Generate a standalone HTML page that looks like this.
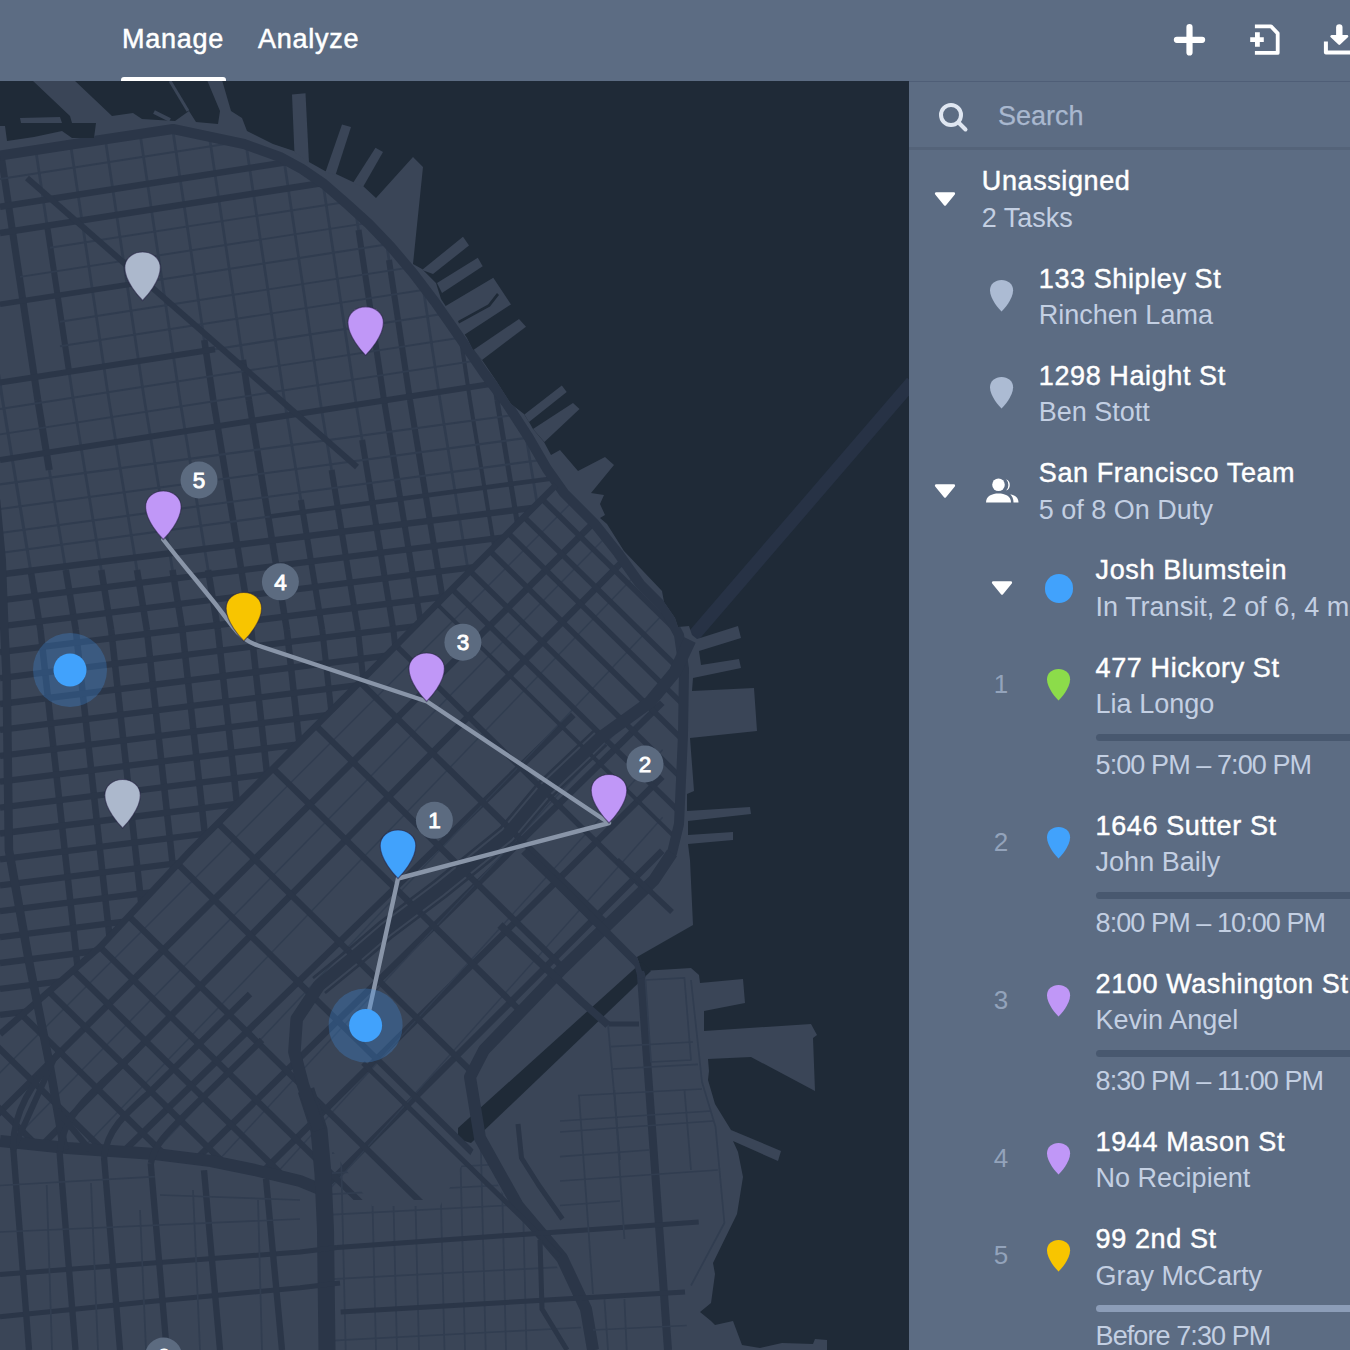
<!DOCTYPE html>
<html><head><meta charset="utf-8"><title>Dispatch</title>
<style>
*{box-sizing:border-box;margin:0;padding:0}
html,body{width:1350px;height:1350px;overflow:hidden;background:#1f2a37;font-family:"Liberation Sans",sans-serif;}
.map{position:absolute;left:0;top:0}
.map text{font-family:"Liberation Sans",sans-serif}
.hdr{position:absolute;left:0;top:0;width:1350px;height:80.5px;background:#5c6c83;z-index:3}
.tab{position:absolute;top:24px;font-size:27px;color:#fff;letter-spacing:.75px;-webkit-text-stroke:.5px #fff;white-space:nowrap}
.ul{position:absolute;left:120.5px;top:76.5px;width:105px;height:4px;background:#fff;border-radius:3px 3px 0 0}
.side{position:absolute;left:909px;top:80.5px;width:441px;height:1270px;background:#5c6c83;z-index:2;overflow:hidden}
.side .topline{position:absolute;left:0;top:0;width:441px;height:1.5px;background:#4f5e77}
.side .sline{position:absolute;left:0;top:66.5px;width:441px;height:2.5px;background:#546379}
.t{position:absolute;white-space:nowrap;font-size:27px;line-height:30px}
.t.h{color:#fff;-webkit-text-stroke:.45px #fff;letter-spacing:.6px}
.t.s{color:#c3cfe2;letter-spacing:0}
.t.tm{letter-spacing:-.92px}
.t.n{color:#93a3bb;font-size:26px}
.bar{position:absolute;left:187px;width:260px;height:7px;border-radius:4px;background:#48586f}
.bar.l{background:#8c9db8}
svg.i{position:absolute;overflow:visible}
</style></head><body>
<svg class="map" width="909" height="1350" viewBox="0 0 909 1350">
<defs><clipPath id="landclip"><polygon points="0.0,126.0 5.0,126.0 7.0,141.0 34.0,137.0 62.0,131.0 72.0,138.0 94.0,138.0 96.0,123.0 72.0,123.0 70.0,116.0 32.0,80.0 74.0,80.0 112.0,116.0 133.0,113.0 142.0,119.0 175.0,121.0 189.0,111.0 196.0,122.0 218.0,124.0 220.0,111.0 207.0,80.0 222.0,80.0 231.0,111.0 242.0,118.0 247.0,131.0 273.0,144.0 294.0,151.0 309.0,162.0 325.0,171.0 336.0,174.0 353.0,182.0 363.0,186.0 376.0,198.0 413.0,157.0 423.0,167.0 413.0,264.0 422.0,269.0 436.0,283.0 441.0,299.0 455.0,320.0 467.0,338.0 473.0,350.0 482.0,360.0 497.0,382.0 511.0,404.0 524.0,414.0 529.0,422.0 533.0,429.0 544.0,442.0 551.0,455.0 560.0,450.0 578.0,471.0 605.0,457.0 614.0,465.0 591.0,493.0 604.0,495.0 600.0,504.0 605.0,515.0 600.0,518.0 607.0,524.0 624.0,551.0 662.0,591.0 664.0,602.0 675.0,618.0 678.0,627.0 689.0,626.0 692.0,635.0 697.0,639.0 738.0,626.0 741.0,638.0 699.0,651.0 701.0,665.0 739.0,659.0 741.0,668.0 693.0,678.0 692.0,691.0 754.0,688.0 757.0,731.0 690.0,738.0 694.0,791.0 687.0,794.0 687.0,811.0 750.0,807.0 751.0,814.0 688.0,821.0 688.0,835.0 733.0,832.0 733.0,840.0 688.0,844.0 690.0,860.0 693.0,925.0 637.0,957.0 642.0,971.0 691.0,968.0 699.0,975.0 700.0,983.0 743.0,979.0 745.0,1003.0 704.0,1011.0 704.0,1031.0 811.0,1024.0 817.0,1035.0 813.0,1038.0 815.0,1091.0 751.0,1057.0 708.0,1059.0 709.0,1071.0 708.0,1080.0 715.0,1104.0 731.0,1130.0 781.0,1151.0 778.0,1161.0 733.0,1141.0 738.0,1152.0 743.0,1177.0 737.0,1214.0 713.0,1263.0 715.0,1274.0 711.0,1303.0 700.0,1312.0 711.0,1321.0 715.0,1325.0 733.0,1321.0 742.0,1345.0 760.0,1348.0 782.0,1343.0 813.0,1344.0 815.0,1339.0 827.0,1340.0 827.0,1350.0 0.0,1350.0"/>
<polygon points="20.0,118.0 60.0,117.0 62.0,123.0 21.0,123.0"/>
<polygon points="294.4,152.0 292.0,94.4 305.5,93.3 309.0,163.0"/>
<polygon points="325.5,172.0 342.0,124.4 351.0,127.0 335.5,175.0"/>
<polygon points="353.0,183.0 375.5,147.8 383.0,152.0 363.0,187.0"/>
<polygon points="422.0,270.0 463.0,236.7 469.0,245.5 433.0,274.0"/>
<polygon points="437.0,283.0 477.8,257.8 482.7,266.2 442.0,293.0"/>
<polygon points="441.0,300.0 444.4,306.7 493.3,277.8 511.0,304.4 463.3,335.5"/>
<polygon points="473.3,350.0 519.0,319.0 526.0,326.7 482.0,360.0"/>
<polygon points="524.4,414.4 561.8,385.5 566.7,392.0 529.0,422.0"/>
<polygon points="533.0,429.0 573.0,403.0 579.5,409.0 544.4,442.0"/>
</clipPath>
<clipPath id="northclip"><polygon points="0.0,155.5 107.0,139.0 173.0,129.0 244.0,144.0 280.0,157.0 302.0,169.0 324.0,184.0 347.0,204.0 369.0,224.0 391.0,247.0 413.0,273.0 435.0,302.0 458.0,335.0 484.0,373.0 507.0,404.0 529.0,438.0 547.0,469.0 556.0,485.0 542.0,499.0 445.0,596.0 362.0,680.0 191.0,850.0 100.0,947.0 0.0,1034.0"/></clipPath>
<clipPath id="somaclip"><polygon points="0.0,1034.0 100.0,947.0 191.0,850.0 362.0,680.0 445.0,596.0 542.0,499.0 564.0,493.0 595.0,524.0 618.0,553.0 640.0,584.0 665.0,609.0 679.0,635.0 684.0,669.0 683.0,735.0 681.0,780.0 679.0,824.0 672.0,853.0 654.0,880.0 560.0,971.0 484.0,1050.0 470.0,1077.0 480.0,1138.0 445.0,1200.0 330.0,1200.0 322.0,1190.0 300.0,1181.0 255.0,1170.0 211.0,1161.0 155.0,1154.0 67.0,1148.0 0.0,1141.0"/></clipPath>
<clipPath id="potclip"><polygon points="332.0,1150.0 372.0,1206.0 440.0,1206.0 470.0,1150.0 485.0,1150.0 500.0,1190.0 545.0,1245.0 575.0,1300.0 586.0,1350.0 332.0,1350.0"/></clipPath>
</defs>
<rect width="909" height="1350" fill="#1f2a37"/>
<line x1="690" y1="640" x2="912" y2="382" stroke="#273245" stroke-width="13"/>
<polygon points="0.0,126.0 5.0,126.0 7.0,141.0 34.0,137.0 62.0,131.0 72.0,138.0 94.0,138.0 96.0,123.0 72.0,123.0 70.0,116.0 32.0,80.0 74.0,80.0 112.0,116.0 133.0,113.0 142.0,119.0 175.0,121.0 189.0,111.0 196.0,122.0 218.0,124.0 220.0,111.0 207.0,80.0 222.0,80.0 231.0,111.0 242.0,118.0 247.0,131.0 273.0,144.0 294.0,151.0 309.0,162.0 325.0,171.0 336.0,174.0 353.0,182.0 363.0,186.0 376.0,198.0 413.0,157.0 423.0,167.0 413.0,264.0 422.0,269.0 436.0,283.0 441.0,299.0 455.0,320.0 467.0,338.0 473.0,350.0 482.0,360.0 497.0,382.0 511.0,404.0 524.0,414.0 529.0,422.0 533.0,429.0 544.0,442.0 551.0,455.0 560.0,450.0 578.0,471.0 605.0,457.0 614.0,465.0 591.0,493.0 604.0,495.0 600.0,504.0 605.0,515.0 600.0,518.0 607.0,524.0 624.0,551.0 662.0,591.0 664.0,602.0 675.0,618.0 678.0,627.0 689.0,626.0 692.0,635.0 697.0,639.0 738.0,626.0 741.0,638.0 699.0,651.0 701.0,665.0 739.0,659.0 741.0,668.0 693.0,678.0 692.0,691.0 754.0,688.0 757.0,731.0 690.0,738.0 694.0,791.0 687.0,794.0 687.0,811.0 750.0,807.0 751.0,814.0 688.0,821.0 688.0,835.0 733.0,832.0 733.0,840.0 688.0,844.0 690.0,860.0 693.0,925.0 637.0,957.0 642.0,971.0 691.0,968.0 699.0,975.0 700.0,983.0 743.0,979.0 745.0,1003.0 704.0,1011.0 704.0,1031.0 811.0,1024.0 817.0,1035.0 813.0,1038.0 815.0,1091.0 751.0,1057.0 708.0,1059.0 709.0,1071.0 708.0,1080.0 715.0,1104.0 731.0,1130.0 781.0,1151.0 778.0,1161.0 733.0,1141.0 738.0,1152.0 743.0,1177.0 737.0,1214.0 713.0,1263.0 715.0,1274.0 711.0,1303.0 700.0,1312.0 711.0,1321.0 715.0,1325.0 733.0,1321.0 742.0,1345.0 760.0,1348.0 782.0,1343.0 813.0,1344.0 815.0,1339.0 827.0,1340.0 827.0,1350.0 0.0,1350.0" fill="#3a4557"/>
<polygon points="20.0,118.0 60.0,117.0 62.0,123.0 21.0,123.0" fill="#3a4557"/>
<polygon points="294.4,152.0 292.0,94.4 305.5,93.3 309.0,163.0" fill="#3a4557"/>
<polygon points="325.5,172.0 342.0,124.4 351.0,127.0 335.5,175.0" fill="#3a4557"/>
<polygon points="353.0,183.0 375.5,147.8 383.0,152.0 363.0,187.0" fill="#3a4557"/>
<polygon points="422.0,270.0 463.0,236.7 469.0,245.5 433.0,274.0" fill="#3a4557"/>
<polygon points="437.0,283.0 477.8,257.8 482.7,266.2 442.0,293.0" fill="#3a4557"/>
<polygon points="441.0,300.0 444.4,306.7 493.3,277.8 511.0,304.4 463.3,335.5" fill="#3a4557"/>
<polygon points="473.3,350.0 519.0,319.0 526.0,326.7 482.0,360.0" fill="#3a4557"/>
<polygon points="524.4,414.4 561.8,385.5 566.7,392.0 529.0,422.0" fill="#3a4557"/>
<polygon points="533.0,429.0 573.0,403.0 579.5,409.0 544.4,442.0" fill="#3a4557"/>
<line x1="170" y1="81" x2="188" y2="111" stroke="#3a4557" stroke-width="3"/>
<line x1="154" y1="112" x2="170" y2="120" stroke="#3a4557" stroke-width="4"/>
<polygon points="458.0,321.0 488.0,304.4 497.0,293.0 499.0,295.0 490.0,306.5 459.0,323.5" fill="#1f2a37"/>
<polygon points="642.0,962.0 651.0,971.0 471.0,1143.0 458.0,1139.0 458.0,1128.0" fill="#1f2a37"/>
<g clip-path="url(#landclip)" fill="none" stroke-linecap="butt" stroke-linejoin="round">
<g clip-path="url(#northclip)">
<line x1="-84.0" y1="60.0" x2="-33.0" y2="400.0" stroke="#303c4f" stroke-width="3"/>
<line x1="-33.0" y1="400.0" x2="-9.9" y2="540.0" stroke="#303c4f" stroke-width="3"/>
<line x1="-48.5" y1="60.0" x2="2.5" y2="400.0" stroke="#303c4f" stroke-width="3"/>
<line x1="2.5" y1="400.0" x2="30.6" y2="570.0" stroke="#303c4f" stroke-width="3"/>
<line x1="30.6" y1="570.0" x2="40.5" y2="630.0" stroke="#2b3648" stroke-width="6.5"/>
<line x1="40.5" y1="630.0" x2="125.2" y2="1400.0" stroke="#2b3648" stroke-width="6.5"/>
<line x1="-13.2" y1="60.0" x2="37.8" y2="400.0" stroke="#2b3648" stroke-width="7"/>
<line x1="37.8" y1="400.0" x2="49.3" y2="470.0" stroke="#2b3648" stroke-width="7"/>
<line x1="49.3" y1="470.0" x2="65.8" y2="570.0" stroke="#303c4f" stroke-width="2.7"/>
<line x1="65.8" y1="570.0" x2="75.8" y2="630.0" stroke="#2b3648" stroke-width="6.5"/>
<line x1="75.8" y1="630.0" x2="160.4" y2="1400.0" stroke="#2b3648" stroke-width="6.5"/>
<line x1="22.3" y1="60.0" x2="47.0" y2="225.0" stroke="#303c4f" stroke-width="2.7"/>
<line x1="47.0" y1="225.0" x2="69.1" y2="372.0" stroke="#2b3648" stroke-width="6"/>
<line x1="69.1" y1="372.0" x2="73.3" y2="400.0" stroke="#303c4f" stroke-width="2.7"/>
<line x1="73.3" y1="400.0" x2="101.3" y2="570.0" stroke="#303c4f" stroke-width="2.7"/>
<line x1="101.3" y1="570.0" x2="111.2" y2="630.0" stroke="#2b3648" stroke-width="6.5"/>
<line x1="111.2" y1="630.0" x2="195.9" y2="1400.0" stroke="#2b3648" stroke-width="6.5"/>
<line x1="57.9" y1="60.0" x2="108.9" y2="400.0" stroke="#303c4f" stroke-width="2.7"/>
<line x1="108.9" y1="400.0" x2="137.0" y2="570.0" stroke="#303c4f" stroke-width="2.7"/>
<line x1="137.0" y1="570.0" x2="146.9" y2="630.0" stroke="#2b3648" stroke-width="6.5"/>
<line x1="146.9" y1="630.0" x2="231.6" y2="1400.0" stroke="#2b3648" stroke-width="6.5"/>
<line x1="93.4" y1="60.0" x2="144.4" y2="400.0" stroke="#303c4f" stroke-width="2.7"/>
<line x1="144.4" y1="400.0" x2="172.5" y2="570.0" stroke="#303c4f" stroke-width="2.7"/>
<line x1="172.5" y1="570.0" x2="182.4" y2="630.0" stroke="#2b3648" stroke-width="6.5"/>
<line x1="182.4" y1="630.0" x2="267.1" y2="1400.0" stroke="#2b3648" stroke-width="6.5"/>
<line x1="129.0" y1="60.0" x2="180.0" y2="400.0" stroke="#303c4f" stroke-width="2.7"/>
<line x1="180.0" y1="400.0" x2="208.1" y2="570.0" stroke="#303c4f" stroke-width="2.7"/>
<line x1="208.1" y1="570.0" x2="217.9" y2="630.0" stroke="#2b3648" stroke-width="6.5"/>
<line x1="217.9" y1="630.0" x2="302.6" y2="1400.0" stroke="#2b3648" stroke-width="6.5"/>
<line x1="162.3" y1="60.0" x2="204.3" y2="340.0" stroke="#303c4f" stroke-width="2.7"/>
<line x1="204.3" y1="340.0" x2="213.3" y2="400.0" stroke="#2b3648" stroke-width="6.5"/>
<line x1="213.3" y1="400.0" x2="251.2" y2="630.0" stroke="#2b3648" stroke-width="6.5"/>
<line x1="251.2" y1="630.0" x2="335.9" y2="1400.0" stroke="#2b3648" stroke-width="6.5"/>
<line x1="197.9" y1="60.0" x2="242.9" y2="360.0" stroke="#303c4f" stroke-width="2.7"/>
<line x1="242.9" y1="360.0" x2="248.9" y2="400.0" stroke="#2b3648" stroke-width="6.5"/>
<line x1="248.9" y1="400.0" x2="286.9" y2="630.0" stroke="#2b3648" stroke-width="6.5"/>
<line x1="286.9" y1="630.0" x2="371.6" y2="1400.0" stroke="#2b3648" stroke-width="6.5"/>
<line x1="233.4" y1="60.0" x2="284.4" y2="400.0" stroke="#303c4f" stroke-width="2.7"/>
<line x1="284.4" y1="400.0" x2="300.9" y2="500.0" stroke="#303c4f" stroke-width="2.7"/>
<line x1="300.9" y1="500.0" x2="322.3" y2="630.0" stroke="#2b3648" stroke-width="6"/>
<line x1="322.3" y1="630.0" x2="407.0" y2="1400.0" stroke="#2b3648" stroke-width="6"/>
<line x1="269.0" y1="60.0" x2="320.0" y2="400.0" stroke="#303c4f" stroke-width="2.7"/>
<line x1="320.0" y1="400.0" x2="331.6" y2="470.0" stroke="#303c4f" stroke-width="2.7"/>
<line x1="331.6" y1="470.0" x2="357.9" y2="630.0" stroke="#2b3648" stroke-width="6"/>
<line x1="357.9" y1="630.0" x2="442.6" y2="1400.0" stroke="#2b3648" stroke-width="6"/>
<line x1="304.5" y1="60.0" x2="355.5" y2="400.0" stroke="#303c4f" stroke-width="2.7"/>
<line x1="355.5" y1="400.0" x2="362.1" y2="440.0" stroke="#303c4f" stroke-width="2.7"/>
<line x1="362.1" y1="440.0" x2="393.4" y2="630.0" stroke="#2b3648" stroke-width="6"/>
<line x1="393.4" y1="630.0" x2="478.1" y2="1400.0" stroke="#2b3648" stroke-width="6"/>
<line x1="333.0" y1="60.0" x2="358.5" y2="230.0" stroke="#303c4f" stroke-width="2.7"/>
<line x1="358.5" y1="230.0" x2="384.0" y2="400.0" stroke="#2b3648" stroke-width="6"/>
<line x1="384.0" y1="400.0" x2="421.9" y2="630.0" stroke="#2b3648" stroke-width="6"/>
<line x1="421.9" y1="630.0" x2="506.6" y2="1400.0" stroke="#2b3648" stroke-width="6"/>
<line x1="359.0" y1="60.0" x2="389.0" y2="260.0" stroke="#303c4f" stroke-width="2.7"/>
<line x1="389.0" y1="260.0" x2="410.0" y2="400.0" stroke="#2b3648" stroke-width="6"/>
<line x1="410.0" y1="400.0" x2="447.9" y2="630.0" stroke="#2b3648" stroke-width="6"/>
<line x1="447.9" y1="630.0" x2="532.6" y2="1400.0" stroke="#2b3648" stroke-width="6"/>
<line x1="389.0" y1="60.0" x2="440.0" y2="400.0" stroke="#303c4f" stroke-width="2.7"/>
<line x1="440.0" y1="400.0" x2="477.9" y2="630.0" stroke="#303c4f" stroke-width="2.7"/>
<line x1="477.9" y1="630.0" x2="562.6" y2="1400.0" stroke="#303c4f" stroke-width="2.7"/>
<line x1="419.0" y1="60.0" x2="470.0" y2="400.0" stroke="#2b3648" stroke-width="4"/>
<line x1="470.0" y1="400.0" x2="507.9" y2="630.0" stroke="#2b3648" stroke-width="4"/>
<line x1="507.9" y1="630.0" x2="592.6" y2="1400.0" stroke="#2b3648" stroke-width="4"/>
<line x1="446.0" y1="60.0" x2="497.0" y2="400.0" stroke="#2b3648" stroke-width="5"/>
<line x1="497.0" y1="400.0" x2="535.0" y2="630.0" stroke="#2b3648" stroke-width="5"/>
<line x1="535.0" y1="630.0" x2="619.7" y2="1400.0" stroke="#2b3648" stroke-width="5"/>
<line x1="469.0" y1="60.0" x2="520.0" y2="400.0" stroke="#303c4f" stroke-width="2.7"/>
<line x1="520.0" y1="400.0" x2="558.0" y2="630.0" stroke="#303c4f" stroke-width="2.7"/>
<line x1="558.0" y1="630.0" x2="642.7" y2="1400.0" stroke="#303c4f" stroke-width="2.7"/>
<line x1="0.0" y1="179.0" x2="909.0" y2="38.1" stroke="#303c4f" stroke-width="1.9"/>
<line x1="0.0" y1="206.7" x2="909.0" y2="65.8" stroke="#2b3648" stroke-width="6.5"/>
<line x1="0.0" y1="233.0" x2="909.0" y2="92.1" stroke="#2b3648" stroke-width="6.5"/>
<line x1="50.0" y1="247.8" x2="909.0" y2="114.6" stroke="#303c4f" stroke-width="1.9"/>
<line x1="20.0" y1="276.9" x2="909.0" y2="139.1" stroke="#303c4f" stroke-width="1.9"/>
<line x1="0.0" y1="304.4" x2="140.0" y2="282.7" stroke="#2b3648" stroke-width="5.5"/>
<line x1="140.0" y1="282.7" x2="909.0" y2="163.5" stroke="#303c4f" stroke-width="2.1"/>
<line x1="60.0" y1="321.7" x2="909.0" y2="190.1" stroke="#303c4f" stroke-width="1.9"/>
<line x1="60.0" y1="346.2" x2="909.0" y2="214.6" stroke="#303c4f" stroke-width="1.9"/>
<line x1="0.0" y1="382.5" x2="215.0" y2="349.2" stroke="#2b3648" stroke-width="6"/>
<line x1="215.0" y1="349.2" x2="909.0" y2="241.6" stroke="#303c4f" stroke-width="2.1"/>
<line x1="0.0" y1="409.0" x2="909.0" y2="268.1" stroke="#303c4f" stroke-width="1.9"/>
<line x1="0.0" y1="434.4" x2="909.0" y2="293.5" stroke="#303c4f" stroke-width="1.9"/>
<line x1="0.0" y1="460.0" x2="909.0" y2="319.1" stroke="#2b3648" stroke-width="6"/>
<line x1="0.0" y1="484.4" x2="909.0" y2="361.7" stroke="#303c4f" stroke-width="2.1"/>
<line x1="0.0" y1="509.0" x2="909.0" y2="386.3" stroke="#303c4f" stroke-width="2.1"/>
<line x1="0.0" y1="533.0" x2="909.0" y2="410.3" stroke="#303c4f" stroke-width="2.1"/>
<line x1="0.0" y1="553.0" x2="270.0" y2="516.5" stroke="#303c4f" stroke-width="2.1"/>
<line x1="270.0" y1="516.5" x2="909.0" y2="430.3" stroke="#2b3648" stroke-width="4.5"/>
<line x1="0.0" y1="574.5" x2="909.0" y2="460.9" stroke="#2b3648" stroke-width="6.3"/>
<line x1="0.0" y1="600.4" x2="909.0" y2="486.8" stroke="#2b3648" stroke-width="6.3"/>
<line x1="0.0" y1="626.3" x2="909.0" y2="512.7" stroke="#2b3648" stroke-width="6.3"/>
<line x1="0.0" y1="652.2" x2="909.0" y2="538.6" stroke="#2b3648" stroke-width="6.3"/>
<line x1="0.0" y1="678.1" x2="909.0" y2="564.5" stroke="#2b3648" stroke-width="6.3"/>
<line x1="0.0" y1="704.0" x2="909.0" y2="590.4" stroke="#2b3648" stroke-width="6.3"/>
<line x1="0.0" y1="729.9" x2="909.0" y2="616.3" stroke="#2b3648" stroke-width="6.3"/>
<line x1="0.0" y1="755.8" x2="909.0" y2="642.2" stroke="#2b3648" stroke-width="6.3"/>
<line x1="0.0" y1="781.7" x2="909.0" y2="668.1" stroke="#2b3648" stroke-width="6.3"/>
<line x1="0.0" y1="807.6" x2="909.0" y2="694.0" stroke="#2b3648" stroke-width="6.3"/>
<line x1="0.0" y1="833.5" x2="909.0" y2="719.9" stroke="#2b3648" stroke-width="6.3"/>
<line x1="0.0" y1="859.4" x2="909.0" y2="745.8" stroke="#2b3648" stroke-width="6.3"/>
<line x1="0.0" y1="885.3" x2="909.0" y2="771.7" stroke="#2b3648" stroke-width="6.3"/>
<line x1="0.0" y1="911.2" x2="909.0" y2="797.6" stroke="#2b3648" stroke-width="6.3"/>
<line x1="0.0" y1="937.1" x2="909.0" y2="823.5" stroke="#2b3648" stroke-width="6.3"/>
<line x1="0.0" y1="963.0" x2="909.0" y2="849.4" stroke="#2b3648" stroke-width="6.3"/>
<line x1="0.0" y1="988.9" x2="909.0" y2="875.3" stroke="#2b3648" stroke-width="6.3"/>
<line x1="0.0" y1="1014.8" x2="909.0" y2="901.2" stroke="#2b3648" stroke-width="6.3"/>
<line x1="0.0" y1="1040.7" x2="909.0" y2="927.1" stroke="#2b3648" stroke-width="6.3"/>
<line x1="0.0" y1="1066.6" x2="909.0" y2="953.0" stroke="#2b3648" stroke-width="6.3"/>
<line x1="0.0" y1="1092.5" x2="909.0" y2="978.9" stroke="#2b3648" stroke-width="6.3"/>
</g>
<g clip-path="url(#somaclip)">
<line x1="-187.2" y1="1297.8" x2="794.4" y2="323.4" stroke="#2b3648" stroke-width="6.5"/>
<line x1="-236.8" y1="1425.7" x2="893.6" y2="288.8" stroke="#2b3648" stroke-width="6.5"/>
<line x1="40.0" y1="1232.5" x2="573.3" y2="715.0" stroke="#2b3648" stroke-width="6.5"/>
<line x1="-48.8" y1="1399.1" x2="662.2" y2="702.8" stroke="#2b3648" stroke-width="6.5"/>
<line x1="-48.8" y1="1479.5" x2="662.2" y2="776.8" stroke="#2b3648" stroke-width="6.5"/>
<line x1="-48.8" y1="1559.9" x2="662.2" y2="850.8" stroke="#2b3648" stroke-width="6.5"/>
<line x1="-61.0" y1="1133.5" x2="662.6" y2="411.7" stroke="#313d50" stroke-width="1.4"/>
<line x1="-61.0" y1="1215.5" x2="662.6" y2="479.3" stroke="#313d50" stroke-width="1.4"/>
<line x1="-61.0" y1="1297.5" x2="662.6" y2="546.9" stroke="#313d50" stroke-width="1.4"/>
<line x1="-61.0" y1="1379.5" x2="662.6" y2="614.5" stroke="#313d50" stroke-width="1.4"/>
<line x1="-61.0" y1="1461.5" x2="662.6" y2="682.1" stroke="#313d50" stroke-width="1.4"/>
<line x1="-61.0" y1="1543.5" x2="662.6" y2="749.7" stroke="#313d50" stroke-width="1.4"/>
<line x1="-61.0" y1="1625.5" x2="662.6" y2="817.3" stroke="#313d50" stroke-width="1.4"/>
<line x1="-360.0" y1="1358.0" x2="140.0" y2="1848.0" stroke="#2b3648" stroke-width="6.3"/>
<line x1="-320.0" y1="1322.0" x2="180.0" y2="1812.0" stroke="#2b3648" stroke-width="6.3"/>
<line x1="-280.0" y1="1286.0" x2="220.0" y2="1776.0" stroke="#2b3648" stroke-width="6.3"/>
<line x1="-240.0" y1="1250.0" x2="260.0" y2="1740.0" stroke="#2b3648" stroke-width="6.3"/>
<line x1="-200.0" y1="1214.0" x2="300.0" y2="1704.0" stroke="#2b3648" stroke-width="6.3"/>
<line x1="-160.0" y1="1178.0" x2="340.0" y2="1668.0" stroke="#2b3648" stroke-width="6.3"/>
<line x1="-120.0" y1="1142.0" x2="380.0" y2="1632.0" stroke="#2b3648" stroke-width="6.3"/>
<line x1="-80.0" y1="1106.0" x2="420.0" y2="1596.0" stroke="#2b3648" stroke-width="6.3"/>
<line x1="-40.0" y1="1070.0" x2="460.0" y2="1560.0" stroke="#2b3648" stroke-width="6.3"/>
<line x1="-8.0" y1="1041.2" x2="492.0" y2="1531.2" stroke="#2b3648" stroke-width="6.3"/>
<line x1="22.0" y1="1014.9" x2="522.0" y2="1504.9" stroke="#2b3648" stroke-width="6.3"/>
<line x1="48.9" y1="991.5" x2="548.9" y2="1481.5" stroke="#2b3648" stroke-width="6.3"/>
<line x1="73.3" y1="970.2" x2="573.3" y2="1460.2" stroke="#2b3648" stroke-width="6.3"/>
<line x1="100.0" y1="947.0" x2="600.0" y2="1437.0" stroke="#2b3648" stroke-width="6.3"/>
<line x1="128.9" y1="916.2" x2="628.9" y2="1406.2" stroke="#2b3648" stroke-width="6.3"/>
<line x1="177.8" y1="864.1" x2="677.8" y2="1354.1" stroke="#2b3648" stroke-width="6.3"/>
<line x1="218.0" y1="823.2" x2="718.0" y2="1313.2" stroke="#2b3648" stroke-width="6.3"/>
<line x1="273.0" y1="768.5" x2="773.0" y2="1258.5" stroke="#2b3648" stroke-width="6.3"/>
<line x1="316.0" y1="725.7" x2="816.0" y2="1215.7" stroke="#2b3648" stroke-width="6.3"/>
<line x1="360.0" y1="682.0" x2="860.0" y2="1172.0" stroke="#2b3648" stroke-width="6.3"/>
<line x1="396.0" y1="645.6" x2="896.0" y2="1135.6" stroke="#2b3648" stroke-width="5.5"/>
<line x1="437.0" y1="604.1" x2="937.0" y2="1094.1" stroke="#2b3648" stroke-width="4"/>
<line x1="452.0" y1="589.0" x2="952.0" y2="1079.0" stroke="#2b3648" stroke-width="5.5"/>
<line x1="470.0" y1="571.0" x2="970.0" y2="1061.0" stroke="#2b3648" stroke-width="5.5"/>
<line x1="490.0" y1="551.0" x2="990.0" y2="1041.0" stroke="#2b3648" stroke-width="5.5"/>
<line x1="508.0" y1="533.0" x2="1008.0" y2="1023.0" stroke="#2b3648" stroke-width="5.5"/>
<line x1="524.0" y1="517.0" x2="1024.0" y2="1007.0" stroke="#2b3648" stroke-width="5.5"/>
<line x1="542.0" y1="499.0" x2="1042.0" y2="989.0" stroke="#2b3648" stroke-width="5.5"/>
</g>
<g clip-path="url(#potclip)">
<line x1="340.7" y1="1140.0" x2="345.7" y2="1350.0" stroke="#313d50" stroke-width="1.7"/>
<line x1="371.0" y1="1140.0" x2="376.0" y2="1350.0" stroke="#313d50" stroke-width="1.7"/>
<line x1="392.0" y1="1140.0" x2="397.0" y2="1350.0" stroke="#313d50" stroke-width="1.7"/>
<line x1="414.0" y1="1140.0" x2="419.0" y2="1350.0" stroke="#313d50" stroke-width="1.7"/>
<line x1="439.5" y1="1140.0" x2="444.5" y2="1350.0" stroke="#313d50" stroke-width="1.7"/>
<line x1="460.0" y1="1140.0" x2="465.0" y2="1350.0" stroke="#313d50" stroke-width="1.7"/>
<line x1="480.7" y1="1140.0" x2="485.7" y2="1350.0" stroke="#313d50" stroke-width="1.7"/>
<line x1="501.0" y1="1140.0" x2="506.0" y2="1350.0" stroke="#313d50" stroke-width="1.7"/>
<line x1="521.5" y1="1140.0" x2="526.5" y2="1350.0" stroke="#313d50" stroke-width="1.7"/>
<line x1="325.0" y1="1153.5" x2="600.0" y2="1139.0" stroke="#313d50" stroke-width="1.7"/>
<line x1="325.0" y1="1173.5" x2="600.0" y2="1159.0" stroke="#313d50" stroke-width="1.7"/>
<line x1="325.0" y1="1194.5" x2="600.0" y2="1180.0" stroke="#313d50" stroke-width="1.7"/>
<line x1="325.0" y1="1215.0" x2="600.0" y2="1200.5" stroke="#313d50" stroke-width="1.7"/>
<line x1="325.0" y1="1279.5" x2="600.0" y2="1265.0" stroke="#313d50" stroke-width="1.7"/>
<line x1="325.0" y1="1341.0" x2="600.0" y2="1326.5" stroke="#313d50" stroke-width="1.7"/>
</g>
<polyline points="0.0,155.5 107.0,139.0 173.0,129.0 244.0,144.0 280.0,157.0 302.0,169.0 324.0,184.0 347.0,204.0 369.0,224.0 391.0,247.0 413.0,273.0 435.0,302.0 458.0,335.0 484.0,373.0 507.0,404.0 529.0,438.0 547.0,469.0 564.0,493.0 595.0,524.0 618.0,553.0 640.0,584.0 665.0,609.0 679.0,635.0 684.0,669.0 683.0,735.0 681.0,780.0 679.0,824.0 672.0,853.0 654.0,880.0 560.0,971.0 484.0,1050.0 470.0,1077.0 480.0,1138.0 518.0,1206.0 562.0,1258.0 586.0,1309.0 593.0,1350.0" stroke="#2b3648" stroke-width="10"/>
<polyline points="672.0,853.0 654.0,880.0 560.0,971.0 484.0,1050.0 470.0,1077.0 480.0,1138.0 518.0,1206.0 562.0,1258.0 586.0,1309.0 593.0,1350.0" stroke="#2b3648" stroke-width="12"/>
<polyline points="0.0,1034.0 100.0,947.0 191.0,850.0 362.0,680.0 445.0,596.0 542.0,499.0 556.0,485.0" stroke="#2b3648" stroke-width="6.5"/>
<polyline points="27.0,178.0 357.0,467.0" stroke="#2b3648" stroke-width="6"/>
<polyline points="0.0,1141.0 67.0,1148.0 155.0,1154.0 211.0,1161.0 255.0,1170.0 300.0,1181.0 322.0,1190.0" stroke="#2b3648" stroke-width="12"/>
<polyline points="327.0,1350.0 325.5,1230.0 323.0,1174.0 319.0,1130.0 306.0,1090.0" stroke="#2b3648" stroke-width="17"/>
<polyline points="319.0,1130.0 303.0,1085.0 294.4,1052.0 296.7,1019.0 319.0,985.5 354.4,956.7 385.5,930.0 440.0,889.0 507.0,835.0 545.0,790.0 600.0,738.0 650.0,702.0 675.0,672.0 690.0,640.0" stroke="#2b3648" stroke-width="12.5"/>
<polyline points="363.0,1063.0 530.0,1225.5 560.0,1256.0" stroke="#2b3648" stroke-width="5"/>
<polyline points="640.8,973.0 668.0,1350.0" stroke="#2b3648" stroke-width="8"/>
<polyline points="337.0,1247.5 698.7,1222.0" stroke="#2b3648" stroke-width="5"/>
<polyline points="340.7,1312.0 685.0,1292.0" stroke="#2b3648" stroke-width="5"/>
<polyline points="540.0,1240.0 542.0,1309.0 567.0,1350.0" stroke="#2b3648" stroke-width="5"/>
<polyline points="0.0,1274.4 300.0,1252.0 337.0,1247.5" stroke="#2b3648" stroke-width="5"/>
<polyline points="0.0,1316.7 155.5,1301.0 300.0,1287.8 340.0,1283.0" stroke="#2b3648" stroke-width="5"/>
<polyline points="13.0,1144.9 29.0,1350.0" stroke="#2b3648" stroke-width="6.3"/>
<polyline points="59.5,1151.1 75.5,1350.0" stroke="#2b3648" stroke-width="6.3"/>
<polyline points="104.0,1157.0 120.0,1350.0" stroke="#2b3648" stroke-width="6.3"/>
<polyline points="150.7,1163.2 166.7,1350.0" stroke="#2b3648" stroke-width="6.3"/>
<polyline points="204.0,1170.3 220.0,1350.0" stroke="#2b3648" stroke-width="6.3"/>
<polyline points="266.0,1178.6 282.0,1350.0" stroke="#2b3648" stroke-width="6.3"/>
<polyline points="608.0,1024.0 639.0,1024.0" stroke="#2b3648" stroke-width="5"/>
<polyline points="611.0,1046.7 693.0,1042.0" stroke="#313d50" stroke-width="1.7"/>
<polyline points="613.0,1069.0 698.0,1064.4" stroke="#313d50" stroke-width="1.7"/>
<polyline points="578.0,1095.5 702.0,1089.0" stroke="#313d50" stroke-width="1.7"/>
<polyline points="560.0,1121.0 711.0,1111.0" stroke="#313d50" stroke-width="1.7"/>
<polyline points="560.0,1132.0 713.0,1121.0" stroke="#313d50" stroke-width="1.7"/>
<polyline points="608.0,1024.4 620.0,1160.0" stroke="#313d50" stroke-width="1.7"/>
<polyline points="579.0,1095.5 593.0,1294.0" stroke="#313d50" stroke-width="1.7"/>
<polyline points="684.4,1089.0 691.0,1170.0" stroke="#313d50" stroke-width="1.7"/>
<polyline points="691.0,980.0 702.0,1082.0 715.5,1126.7 724.4,1223.0 691.0,1285.5" stroke="#313d50" stroke-width="1.7"/>
<polyline points="645.5,980.0 684.4,977.8 691.0,1060.0 651.0,1062.0 645.5,980.0" stroke="#313d50" stroke-width="1.7"/>
<polyline points="560.0,1156.7 649.0,1150.0" stroke="#313d50" stroke-width="1.7"/>
<polyline points="560.0,1181.0 717.8,1170.0" stroke="#313d50" stroke-width="1.7"/>
<polyline points="560.0,1205.5 620.0,1201.0" stroke="#313d50" stroke-width="1.7"/>
<polyline points="614.4,1090.0 624.4,1239.0" stroke="#313d50" stroke-width="1.7"/>
<polyline points="604.4,1299.0 608.0,1350.0" stroke="#313d50" stroke-width="1.7"/>
<polyline points="624.4,1299.0 626.7,1350.0" stroke="#313d50" stroke-width="1.7"/>
<polyline points="593.0,1330.0 686.7,1325.5" stroke="#313d50" stroke-width="1.7"/>
<polyline points="-4.0,500.0 1.7,560.0 4.4,630.0 6.7,680.0 8.9,850.0 28.9,961.0 48.9,1061.0 64.4,1150.0" stroke="#2b3648" stroke-width="8.5"/>
<polyline points="53.0,1061.0 13.0,1150.0" stroke="#2b3648" stroke-width="6"/>
<polyline points="0.0,1232.0 300.0,1219.0" stroke="#313d50" stroke-width="1.7"/>
<polyline points="0.0,1185.5 155.0,1176.7" stroke="#313d50" stroke-width="1.7"/>
<polyline points="160.0,1195.0 300.0,1200.0" stroke="#313d50" stroke-width="1.7"/>
<polyline points="46.7,1185.0 52.0,1350.0" stroke="#313d50" stroke-width="1.7"/>
<polyline points="91.0,1183.0 98.0,1350.0" stroke="#313d50" stroke-width="1.7"/>
<polyline points="193.0,1190.0 200.0,1350.0" stroke="#313d50" stroke-width="1.7"/>
<polyline points="258.0,1200.0 262.0,1350.0" stroke="#313d50" stroke-width="1.7"/>
<polyline points="140.0,1210.0 146.0,1350.0" stroke="#313d50" stroke-width="1.7"/>
<polyline points="524.0,851.0 560.0,886.0 638.0,964.0 642.0,978.0" stroke="#2b3648" stroke-width="8"/>
<polyline points="500.0,925.0 582.0,1002.0 608.0,1025.0" stroke="#2b3648" stroke-width="7.5"/>
<polyline points="617.0,860.0 672.0,912.0" stroke="#2b3648" stroke-width="5.5"/>
<polyline points="518.0,1124.0 521.5,1158.0 538.6,1185.0 562.4,1219.0" stroke="#2b3648" stroke-width="5"/>
<polyline points="325.0,992.9 360.5,964.0 391.4,937.5 445.9,896.5 513.5,841.9 551.9,796.6 606.5,744.9" stroke="#2b3648" stroke-width="2.6"/>
<polyline points="313.0,978.1 348.3,949.4 379.6,922.5 434.1,881.5 500.5,828.1 538.1,783.4 593.5,731.1" stroke="#2b3648" stroke-width="2.6"/>
<path d="M13,1146 C14,1112 30,1084 62,1050" stroke="#2b3648" stroke-width="6.3"/>
<path d="M60,1151 C62,1117 92,1092 120,1066 L137,1050" stroke="#2b3648" stroke-width="6.3"/>
<path d="M104,1157 C107,1128 130,1110 150,1092 L250,994" stroke="#2b3648" stroke-width="6.3"/>
<path d="M151,1163 C154,1144 170,1130 190,1110 L262,1040" stroke="#2b3648" stroke-width="6.3"/>
<path d="M57,1110 L90,1150" stroke="#2b3648" stroke-width="6.3"/>
</g>
<path d="M163.3,539.5 Q176,556 196,580 T233,627 Q243,640.5 258,645.5 L427,701.5 L609,823 L398,878.5 L366,1025" fill="none" stroke="#8995a8" stroke-width="4.4" stroke-linejoin="round" stroke-linecap="round"/>
<circle cx="70" cy="670" r="37" fill="#3f9dfb" fill-opacity="0.25"/><circle cx="70" cy="670" r="16.5" fill="#41a2fc"/>
<circle cx="365.6" cy="1025.4" r="37" fill="#3f9dfb" fill-opacity="0.25"/><circle cx="365.6" cy="1025.4" r="16.5" fill="#41a2fc"/>
<path d="M142.6,300.5 C139.1,297.0 124.8,281.5 124.8,267.8 C124.8,258.5 132.8,252.0 142.6,252.0 C152.4,252.0 160.3,258.5 160.3,267.8 C160.3,281.5 146.1,297.0 142.6,300.5Z" fill="#acb8cc" stroke="#221d3f" stroke-opacity=".55" stroke-width="1.2" stroke-linejoin="round"/>
<path d="M365.6,355.3 C362.1,351.8 347.9,336.3 347.9,322.6 C347.9,313.3 355.8,306.8 365.6,306.8 C375.4,306.8 383.4,313.3 383.4,322.6 C383.4,336.3 369.1,351.8 365.6,355.3Z" fill="#c097f7" stroke="#221d3f" stroke-opacity=".55" stroke-width="1.2" stroke-linejoin="round"/>
<path d="M163.3,539.5 C159.8,536.0 145.6,520.5 145.6,506.8 C145.6,497.5 153.5,491.0 163.3,491.0 C173.1,491.0 181.1,497.5 181.1,506.8 C181.1,520.5 166.8,536.0 163.3,539.5Z" fill="#c097f7" stroke="#221d3f" stroke-opacity=".55" stroke-width="1.2" stroke-linejoin="round"/>
<path d="M243.8,641.0 C240.3,637.5 226.1,622.0 226.1,608.3 C226.1,599.0 234.0,592.5 243.8,592.5 C253.6,592.5 261.6,599.0 261.6,608.3 C261.6,622.0 247.3,637.5 243.8,641.0Z" fill="#f8c500" stroke="#221d3f" stroke-opacity=".55" stroke-width="1.2" stroke-linejoin="round"/>
<path d="M122.6,828.0 C119.1,824.5 104.8,809.0 104.8,795.3 C104.8,786.0 112.8,779.5 122.6,779.5 C132.4,779.5 140.3,786.0 140.3,795.3 C140.3,809.0 126.1,824.5 122.6,828.0Z" fill="#acb8cc" stroke="#221d3f" stroke-opacity=".55" stroke-width="1.2" stroke-linejoin="round"/>
<path d="M426.6,701.5 C423.1,698.0 408.9,682.5 408.9,668.8 C408.9,659.5 416.8,653.0 426.6,653.0 C436.4,653.0 444.4,659.5 444.4,668.8 C444.4,682.5 430.1,698.0 426.6,701.5Z" fill="#c097f7" stroke="#221d3f" stroke-opacity=".55" stroke-width="1.2" stroke-linejoin="round"/>
<path d="M609.0,823.0 C605.5,819.5 591.2,804.0 591.2,790.3 C591.2,781.0 599.2,774.5 609.0,774.5 C618.8,774.5 626.8,781.0 626.8,790.3 C626.8,804.0 612.5,819.5 609.0,823.0Z" fill="#c097f7" stroke="#221d3f" stroke-opacity=".55" stroke-width="1.2" stroke-linejoin="round"/>
<path d="M398.0,878.5 C394.5,875.0 380.2,859.5 380.2,845.8 C380.2,836.5 388.2,830.0 398.0,830.0 C407.8,830.0 415.8,836.5 415.8,845.8 C415.8,859.5 401.5,875.0 398.0,878.5Z" fill="#41a2fc" stroke="#221d3f" stroke-opacity=".55" stroke-width="1.2" stroke-linejoin="round"/>
<circle cx="199" cy="480" r="18.5" fill="#5c6b80"/><text x="199" y="488" text-anchor="middle" font-size="22.5" font-weight="400" fill="#fff" stroke="#fff" stroke-width=".9">5</text>
<circle cx="280.4" cy="581.8" r="18.5" fill="#5c6b80"/><text x="280.4" y="589.8" text-anchor="middle" font-size="22.5" font-weight="400" fill="#fff" stroke="#fff" stroke-width=".9">4</text>
<circle cx="462.9" cy="642.2" r="18.5" fill="#5c6b80"/><text x="462.9" y="650.2" text-anchor="middle" font-size="22.5" font-weight="400" fill="#fff" stroke="#fff" stroke-width=".9">3</text>
<circle cx="645" cy="764" r="18.5" fill="#5c6b80"/><text x="645" y="772" text-anchor="middle" font-size="22.5" font-weight="400" fill="#fff" stroke="#fff" stroke-width=".9">2</text>
<circle cx="434.4" cy="820.3" r="18.5" fill="#5c6b80"/><text x="434.4" y="828.3" text-anchor="middle" font-size="22.5" font-weight="400" fill="#fff" stroke="#fff" stroke-width=".9">1</text>
<circle cx="163.5" cy="1356" r="18.5" fill="#5c6b80"/><text x="163.5" y="1364" text-anchor="middle" font-size="22.5" font-weight="400" fill="#fff" stroke="#fff" stroke-width=".9">6</text>
</svg>
<div class="hdr">
  <div class="tab" style="left:122px">Manage</div>
  <div class="tab" style="left:258px">Analyze</div>
  <div class="ul"></div>
  <svg class="i" style="left:0;top:0" width="1350" height="80" viewBox="0 0 1350 80">
    <path d="M1189.5 27.2v25.2M1176.9 39.8h25.2" stroke="#fff" stroke-width="6.2" stroke-linecap="round" fill="none"/>
    <path d="M1254.9 26.3H1271L1277.7 33.4V52.9H1254.9" stroke="#fff" stroke-width="3.8" fill="none" stroke-linejoin="round"/>
    <path d="M1250.2 39.6h13.6M1257.4 32.2v14.6" stroke="#fff" stroke-width="4.8" fill="none"/>
    <path d="M1325.9 41.5V52.6H1352" stroke="#fff" stroke-width="4" fill="none" stroke-linejoin="round"/>
    <path d="M1339.3 27.4V37" stroke="#fff" stroke-width="6.4" fill="none" stroke-linecap="round"/>
    <path d="M1331.6 36.4H1347L1339.3 43.6Z" stroke="#fff" stroke-width="2.6" fill="#fff" stroke-linejoin="round"/>
  </svg>
</div>
<div class="side">
  <div class="topline"></div><div class="sline"></div>
  <svg class="i" style="left:29px;top:21px" width="32" height="32" viewBox="0 0 32 32"><circle cx="13" cy="13" r="10" stroke="#dfe6f1" stroke-width="4" fill="none"/><path d="M20.5 20.5l7 7" stroke="#dfe6f1" stroke-width="4" stroke-linecap="round"/></svg>
  <div class="t s" style="left:89px;top:20px;color:#a9b8cf;-webkit-text-stroke:.25px #a9b8cf">Search</div>
  <svg class="i" style="left:25.4px;top:111.7px" width="22" height="14" viewBox="0 0 22 14"><path d="M2.2 1.6h17.6L11 12.4z" fill="#fff" stroke="#fff" stroke-width="2.6" stroke-linejoin="round"/></svg>
<div class="t h" style="left:72.8px;top:85.5px">Unassigned</div>
<div class="t s" style="left:72.8px;top:122.0px">2 Tasks</div>
<svg class="i" style="left:81.4px;top:199.4px" width="23.1" height="31.6" viewBox="0 0 23.13 31.6"><path d="M11.56,31.60 C9.28,29.32 0.00,19.22 0.00,10.29 C0.00,4.24 5.18,0.00 11.56,0.00 C17.95,0.00 23.13,4.24 23.13,10.29 C23.13,19.22 13.85,29.32 11.56,31.60Z" fill="#acbbd3"/></svg>
<div class="t h" style="left:129.8px;top:183.0px">133 Shipley St</div>
<div class="t s" style="left:129.8px;top:219.5px">Rinchen Lama</div>
<svg class="i" style="left:81.4px;top:296.7px" width="23.1" height="31.6" viewBox="0 0 23.13 31.6"><path d="M11.56,31.60 C9.28,29.32 0.00,19.22 0.00,10.29 C0.00,4.24 5.18,0.00 11.56,0.00 C17.95,0.00 23.13,4.24 23.13,10.29 C23.13,19.22 13.85,29.32 11.56,31.60Z" fill="#acbbd3"/></svg>
<div class="t h" style="left:129.8px;top:280.3px">1298 Haight St</div>
<div class="t s" style="left:129.8px;top:316.8px">Ben Stott</div>
<svg class="i" style="left:25.4px;top:403.1px" width="22" height="14" viewBox="0 0 22 14"><path d="M2.2 1.6h17.6L11 12.4z" fill="#fff" stroke="#fff" stroke-width="2.6" stroke-linejoin="round"/></svg>
<svg class="i" style="left:76.5px;top:397.8px" width="33" height="25" viewBox="0 0 33 25"><circle cx="12.5" cy="6.8" r="6.3" fill="#fff"/><path d="M0 24.5c0-6.5 6-9 12.5-9s12.5 2.5 12.5 9z" fill="#fff"/><path d="M20.2 1.2a6.3 6.3 0 0 1 0 11.4a8.6 8.6 0 0 0 0-11.4z" fill="#fff"/><path d="M24.3 16.2c4.6.9 8.2 3.3 8.2 8.3h-5c0-3.6-1.2-6.3-3.2-8.3z" fill="#fff"/></svg>
<div class="t h" style="left:129.8px;top:377.5px">San Francisco Team</div>
<div class="t s" style="left:129.8px;top:414.0px">5 of 8 On Duty</div>
<svg class="i" style="left:82.3px;top:500.8px" width="22" height="14" viewBox="0 0 22 14"><path d="M2.2 1.6h17.6L11 12.4z" fill="#fff" stroke="#fff" stroke-width="2.6" stroke-linejoin="round"/></svg>
<div style="position:absolute;left:135.5px;top:493.5px;width:28.6px;height:28.6px;border-radius:50%;background:#41a2fc"></div>
<div class="t h" style="left:186.6px;top:474.8px">Josh Blumstein</div>
<div class="t s" style="left:186.6px;top:511.3px">In Transit, 2 of 6, 4 mi</div>
<div class="t n" style="left:72.0px;width:40px;text-align:center;top:588.3px">1</div>
<svg class="i" style="left:137.9px;top:588.7px" width="23.1" height="31.6" viewBox="0 0 23.13 31.6"><path d="M11.56,31.60 C9.28,29.32 0.00,19.22 0.00,10.29 C0.00,4.24 5.18,0.00 11.56,0.00 C17.95,0.00 23.13,4.24 23.13,10.29 C23.13,19.22 13.85,29.32 11.56,31.60Z" fill="#8cdc4a"/></svg>
<div class="t h" style="left:186.6px;top:572.3px">477 Hickory St</div>
<div class="t s" style="left:186.6px;top:608.8px">Lia Longo</div>
<div class="bar" style="top:653.1px"></div>
<div class="t s tm" style="left:186.6px;top:669.3px">5:00 PM – 7:00 PM</div>
<div class="t n" style="left:72.0px;width:40px;text-align:center;top:746.3px">2</div>
<svg class="i" style="left:137.9px;top:746.7px" width="23.1" height="31.6" viewBox="0 0 23.13 31.6"><path d="M11.56,31.60 C9.28,29.32 0.00,19.22 0.00,10.29 C0.00,4.24 5.18,0.00 11.56,0.00 C17.95,0.00 23.13,4.24 23.13,10.29 C23.13,19.22 13.85,29.32 11.56,31.60Z" fill="#41a2fc"/></svg>
<div class="t h" style="left:186.6px;top:730.3px">1646 Sutter St</div>
<div class="t s" style="left:186.6px;top:766.8px">John Baily</div>
<div class="bar" style="top:811.1px"></div>
<div class="t s tm" style="left:186.6px;top:827.3px">8:00 PM – 10:00 PM</div>
<div class="t n" style="left:72.0px;width:40px;text-align:center;top:904.3px">3</div>
<svg class="i" style="left:137.9px;top:904.7px" width="23.1" height="31.6" viewBox="0 0 23.13 31.6"><path d="M11.56,31.60 C9.28,29.32 0.00,19.22 0.00,10.29 C0.00,4.24 5.18,0.00 11.56,0.00 C17.95,0.00 23.13,4.24 23.13,10.29 C23.13,19.22 13.85,29.32 11.56,31.60Z" fill="#c097f7"/></svg>
<div class="t h" style="left:186.6px;top:888.3px">2100 Washington St</div>
<div class="t s" style="left:186.6px;top:924.8px">Kevin Angel</div>
<div class="bar" style="top:969.1px"></div>
<div class="t s tm" style="left:186.6px;top:985.3px">8:30 PM – 11:00 PM</div>
<div class="t n" style="left:72.0px;width:40px;text-align:center;top:1062.3px">4</div>
<svg class="i" style="left:137.9px;top:1062.7px" width="23.1" height="31.6" viewBox="0 0 23.13 31.6"><path d="M11.56,31.60 C9.28,29.32 0.00,19.22 0.00,10.29 C0.00,4.24 5.18,0.00 11.56,0.00 C17.95,0.00 23.13,4.24 23.13,10.29 C23.13,19.22 13.85,29.32 11.56,31.60Z" fill="#c097f7"/></svg>
<div class="t h" style="left:186.6px;top:1046.3px">1944 Mason St</div>
<div class="t s" style="left:186.6px;top:1082.8px">No Recipient</div>
<div class="t n" style="left:72.0px;width:40px;text-align:center;top:1159.5px">5</div>
<svg class="i" style="left:137.9px;top:1159.9px" width="23.1" height="31.6" viewBox="0 0 23.13 31.6"><path d="M11.56,31.60 C9.28,29.32 0.00,19.22 0.00,10.29 C0.00,4.24 5.18,0.00 11.56,0.00 C17.95,0.00 23.13,4.24 23.13,10.29 C23.13,19.22 13.85,29.32 11.56,31.60Z" fill="#f8c500"/></svg>
<div class="t h" style="left:186.6px;top:1143.5px">99 2nd St</div>
<div class="t s" style="left:186.6px;top:1180.0px">Gray McCarty</div>
<div class="bar l" style="top:1224.3px"></div>
<div class="t s tm" style="left:186.6px;top:1240.5px">Before 7:30 PM</div>
</div>
</body></html>
